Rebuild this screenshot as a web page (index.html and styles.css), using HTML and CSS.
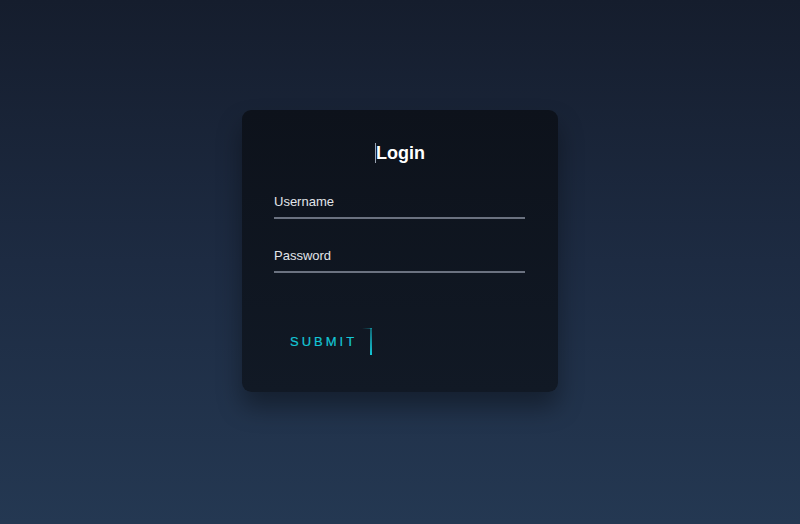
FILE: index.html
```html
<!DOCTYPE html>
<html lang="en">
<head>
<meta charset="utf-8">
<title>Login</title>
<link rel="stylesheet" href="styles.css">
</head>
<body>
<main class="page">
  <form class="card">
    <h2 class="title"><span class="caret"></span>Login</h2>
    <div class="field">
      <label class="label">Username</label>
      <div class="line"></div>
    </div>
    <div class="field">
      <label class="label">Password</label>
      <div class="line"></div>
    </div>
    <div class="actions">
      <button type="button" class="submit">
        <span class="edge-top"></span>
        <span class="edge-right"></span>
        SUBMIT
      </button>
    </div>
  </form>
</main>
</body>
</html>
```
FILE: styles.css
```css
* { box-sizing: border-box; }
html, body { margin: 0; height: 100%; }
body {
  background: linear-gradient(to bottom, #151d2d 0%, #1d2b42 50%, #243852 100%);
  font-family: "Liberation Sans", Arial, sans-serif;
}
.page {
  height: 524px;
  display: flex;
  justify-content: center;
  align-items: flex-start;
  padding-top: 110px;
}
.card {
  width: 316px;
  height: 282px;
  border-radius: 9px;
  background: linear-gradient(to bottom, #0d121b 0%, #111925 100%);
  box-shadow: 0 15px 25px rgba(0,0,0,0.35);
  padding: 32px 32px 0 32px;
  display: flex;
  flex-direction: column;
}
.title {
  margin: 0 0 30px 0;
  text-align: center;
  color: #ffffff;
  font-size: 18px;
  font-weight: bold;
  line-height: 22px;
}
.caret {
  display: inline-block;
  width: 1px;
  height: 20px;
  background: #9aa4b2;
  vertical-align: -4px;
}
.field {
  display: flex;
  flex-direction: column;
  margin-bottom: 29px;
}
.field + .field { margin-bottom: 0; }
.label {
  color: #e2e5ea;
  font-size: 13px;
  line-height: 16px;
  margin-bottom: 7px;
}
.line {
  width: 251px;
  height: 2px;
  background: #6b7280;
}
.actions {
  margin-top: 55px;
  display: flex;
}
.submit {
  position: relative;
  background: transparent;
  border: none;
  color: #14c6d6;
  font-family: "Liberation Sans", Arial, sans-serif;
  font-size: 13px;
  letter-spacing: 3px;
  padding: 6px 15px 6px 16px;
  height: 27px;
  line-height: 15px;
  -webkit-text-stroke: 0.2px #14c6d6;
}
.edge-top {
  position: absolute;
  top: 0;
  right: 0;
  width: 10px;
  height: 1px;
  background: linear-gradient(90deg, transparent, rgba(20,198,214,0.4));
}
.edge-right {
  position: absolute;
  top: 0;
  right: 0;
  width: 2px;
  height: 27px;
  background: linear-gradient(180deg, rgba(20,198,214,0.45), #14c6d6);
}
```
